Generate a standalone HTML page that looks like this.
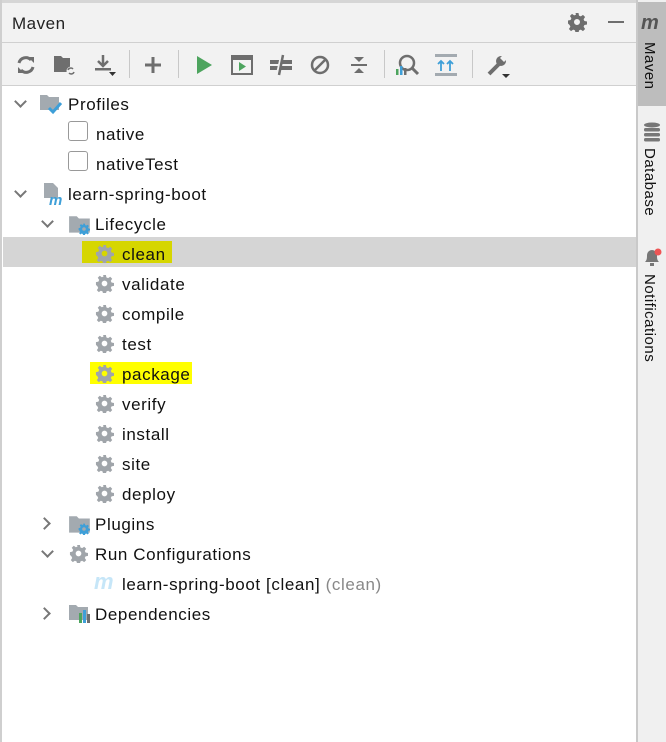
<!DOCTYPE html>
<html><head><meta charset="utf-8"><style>
*{margin:0;padding:0;box-sizing:border-box}
body{width:666px;height:742px;overflow:hidden;background:#fff;font-family:"Liberation Sans",sans-serif;position:relative;color:#111}
.a{position:absolute}
.hdr{left:2px;top:2px;width:634px;height:41px;background:#f2f2f2;border-bottom:1px solid #d0d0d0;border-top:1px solid #d6d6d6}
.tb{left:2px;top:43px;width:634px;height:43px;background:#f2f2f2;border-bottom:1px solid #d0d0d0}
.row{position:absolute;left:2px;width:634px;height:30px;font-size:17px;line-height:32px;letter-spacing:0.6px}
.row span{position:absolute;top:0;white-space:nowrap}
.chev{position:absolute;width:9px;height:9px;border-right:2px solid #777;border-bottom:2px solid #777}
.down{transform:rotate(45deg)}
.right{transform:rotate(-45deg)}
.cb{position:absolute;width:20px;height:20px;border:1.5px solid #999;border-radius:3px;background:#fff}
.sep{position:absolute;top:50px;width:1px;height:28px;background:#c8c8c8}
</style></head><body>
<svg width="0" height="0" style="position:absolute"><defs>
<symbol id="g" viewBox="0 0 20 20"><path fill="currentColor" fill-rule="evenodd" d="M8.5 1h3l.5 2.6 1.8.8 2.2-1.5 2.1 2.1-1.5 2.2.8 1.8 2.6.5v3l-2.6.5-.8 1.8 1.5 2.2-2.1 2.1-2.2-1.5-1.8.8-.5 2.6h-3l-.5-2.6-1.8-.8-2.2 1.5-2.1-2.1 1.5-2.2-.8-1.8L1 11.5v-3l2.6-.5.8-1.8-1.5-2.2 2.1-2.1 2.2 1.5 1.8-.8zM10 7a3 3 0 1 0 0 6 3 3 0 1 0 0-6z"/></symbol>
<symbol id="f" viewBox="0 0 22 20"><path fill="#a3aab0" d="M1 2h7l2 2h10v13H1z"/></symbol>
</defs></svg>
<div class="a" style="left:0;top:0;width:666px;height:2px;background:#d6d6d6"></div>
<div class="a" style="left:0;top:0;width:2px;height:742px;background:#cfcfcf"></div>
<div class="a hdr"></div>
<div class="a" style="left:12px;top:14px;font-size:17px;color:#222;letter-spacing:0.5px">Maven</div>
<svg class="a" style="left:567px;top:12px;color:#6e6e6e" width="20" height="20"><use href="#g"/></svg>
<div class="a" style="left:608px;top:21px;width:16px;height:2px;background:#6e6e6e"></div>
<div class="a tb"></div>
<svg class="a" style="left:15px;top:54px" width="22" height="22" viewBox="0 0 22 22"><path d="M4 9a7 7 0 0 1 12-3M18 13a7 7 0 0 1-12 3" stroke="#6e6e6e" stroke-width="3" fill="none"/><path d="M13 3h6v6zM9 19H3v-6z" fill="#6e6e6e"/></svg>
<svg class="a" style="left:53px;top:55px" width="24" height="22" viewBox="0 0 24 22"><path d="M1 1h7l2 2h7v14H1z" fill="#6e6e6e"/><circle cx="18" cy="16" r="4.5" fill="#f2f2f2"/><path d="M15 15a3 3 0 0 1 5-1M21 17a3 3 0 0 1-5 1" stroke="#6e6e6e" stroke-width="1.5" fill="none"/></svg>
<svg class="a" style="left:94px;top:53px" width="24" height="26" viewBox="0 0 24 26"><path d="M9 2v10M4 8l5 5 5-5" stroke="#6e6e6e" stroke-width="2.5" fill="none"/><rect x="1" y="15" width="16" height="2.5" fill="#6e6e6e"/><path d="M15 19h7l-3.5 4z" fill="#333"/></svg>
<div class="sep" style="left:129px"></div>
<svg class="a" style="left:145px;top:57px" width="16" height="16"><path d="M8 0v16M0 8h16" stroke="#6e6e6e" stroke-width="3"/></svg>
<div class="sep" style="left:178px"></div>
<svg class="a" style="left:196px;top:56px" width="16" height="18"><path d="M1 0l15 9-15 9z" fill="#4da45e"/></svg>
<svg class="a" style="left:231px;top:55px" width="22" height="20"><rect x="1" y="1" width="20" height="18" fill="none" stroke="#6e6e6e" stroke-width="2"/><rect x="1" y="1" width="20" height="4" fill="#6e6e6e"/><path d="M8 7l7 4.5-7 4.5z" fill="#4da45e"/></svg>
<svg class="a" style="left:269px;top:54px" width="24" height="22"><path d="M1 8h22M1 14h22" stroke="#6e6e6e" stroke-width="4"/><path d="M13 0L8 22" stroke="#f2f2f2" stroke-width="3"/><path d="M14 1L10 21" stroke="#6e6e6e" stroke-width="2.5"/></svg>
<svg class="a" style="left:310px;top:55px" width="20" height="20"><circle cx="10" cy="10" r="8" fill="none" stroke="#6e6e6e" stroke-width="2.5"/><path d="M5 15L15 5" stroke="#6e6e6e" stroke-width="2.5"/></svg>
<svg class="a" style="left:349px;top:55px" width="20" height="20"><path d="M2 10h16" stroke="#6e6e6e" stroke-width="2"/><path d="M5 2h10l-5 5zM5 18h10l-5-5z" fill="#6e6e6e"/></svg>
<div class="sep" style="left:384px"></div>
<svg class="a" style="left:394px;top:53px" width="26" height="26" viewBox="0 0 26 26"><circle cx="13" cy="10" r="7" fill="none" stroke="#6e6e6e" stroke-width="2.5"/><path d="M18 15l6 6" stroke="#6e6e6e" stroke-width="3"/><rect x="2" y="16" width="2.5" height="6" fill="#4da45e"/><rect x="6" y="13" width="2.5" height="9" fill="#3e9fd8"/><rect x="10" y="15" width="2.5" height="7" fill="#6e6e6e"/></svg>
<svg class="a" style="left:434px;top:53px" width="24" height="24"><rect x="1" y="1" width="22" height="3" fill="#a3aab0"/><rect x="1" y="20" width="22" height="3" fill="#a3aab0"/><path d="M7 18V8M4 11l3-3 3 3M16 18V8M13 11l3-3 3 3" stroke="#3e9fd8" stroke-width="1.8" fill="none"/></svg>
<div class="sep" style="left:472px"></div>
<svg class="a" style="left:486px;top:53px" width="26" height="26" viewBox="0 0 26 26"><path d="M3 21L13 11" stroke="#6e6e6e" stroke-width="4"/><circle cx="15" cy="8" r="5" fill="#6e6e6e"/><path d="M14 5l4-4 4 4-4 4z" fill="#f2f2f2"/><path d="M16 21h8l-4 4z" fill="#333"/></svg>
<div class="a" style="left:636px;top:0;width:2px;height:742px;background:#c9c9c9"></div>
<div class="a" style="left:638px;top:0;width:28px;height:742px;background:#f0f0f0"></div>
<div class="a" style="left:638px;top:2px;width:28px;height:104px;background:#bdbdbd"></div>
<div class="a" style="left:641px;top:12px;font-size:20px;font-weight:bold;font-style:italic;color:#555">m</div>
<div class="a" style="left:641px;top:42px;font-size:15px;writing-mode:vertical-rl;color:#111;letter-spacing:0.5px">Maven</div>
<svg class="a" style="left:643px;top:122px" width="18" height="20"><ellipse cx="9" cy="3" rx="8" ry="2.5" fill="#777"/><rect x="1" y="6" width="16" height="3.5" rx="1.5" fill="#777"/><rect x="1" y="11" width="16" height="3.5" rx="1.5" fill="#777"/><rect x="1" y="16" width="16" height="3.5" rx="1.5" fill="#777"/></svg>
<div class="a" style="left:641px;top:148px;font-size:15px;writing-mode:vertical-rl;color:#111;letter-spacing:0.5px">Database</div>
<svg class="a" style="left:643px;top:248px" width="20" height="20"><path d="M2 14c2-2 2-4 2-7a5 5 0 0 1 10 0c0 3 0 5 2 7z" fill="#777"/><rect x="7" y="15" width="4" height="3" fill="#777"/><circle cx="15" cy="4" r="3.5" fill="#e55"/></svg>
<div class="a" style="left:641px;top:274px;font-size:15px;writing-mode:vertical-rl;color:#111;letter-spacing:0.5px">Notifications</div>
<div class="a" style="left:3px;top:237px;width:633px;height:30px;background:#d5d5d5"></div>
<div class="a" style="left:82px;top:241px;width:90px;height:22px;background:#d6d600"></div>
<div class="a" style="left:90px;top:362px;width:102px;height:22px;background:#ffff00"></div>

<div class="row" style="top:89px"><i class="chev down" style="left:14px;top:8px"></i>
<svg class="a" style="left:37px;top:4px" width="26" height="22" viewBox="0 0 26 22"><path fill="#a3aab0" d="M1 2h7l2 2h10v13H1z"/><path d="M10 15l4 4 8-9" stroke="#3e9fd8" stroke-width="3" fill="none"/></svg>
<span style="left:66px">Profiles</span></div>
<div class="row" style="top:119px"><i class="cb" style="left:66px;top:2px"></i><span style="left:94px">native</span></div>
<div class="row" style="top:149px"><i class="cb" style="left:66px;top:2px"></i><span style="left:94px">nativeTest</span></div>
<div class="row" style="top:179px"><i class="chev down" style="left:14px;top:8px"></i>
<svg class="a" style="left:40px;top:3px" width="24" height="24" viewBox="0 0 24 24"><path d="M2 1h9l5 5v10H2z" fill="#a3aab0"/><text x="7" y="23" font-family="Liberation Sans" font-weight="bold" font-style="italic" font-size="15" fill="#3e9fd8">m</text></svg>
<span style="left:66px">learn-spring-boot</span></div>
<div class="row" style="top:209px"><i class="chev down" style="left:41px;top:8px"></i>
<svg class="a" style="left:66px;top:4px" width="24" height="24"><use href="#f"/><svg x="10" y="10" width="12" height="12" style="color:#3e9fd8"><use href="#g"/></svg></svg>
<span style="left:93px">Lifecycle</span></div>
<div class="row" style="top:239px"><svg class="a" style="left:93px;top:5px;color:#a0a5aa" width="19" height="19"><use href="#g"/></svg><span style="left:120px">clean</span></div>
<div class="row" style="top:269px"><svg class="a" style="left:93px;top:5px;color:#a0a5aa" width="19" height="19"><use href="#g"/></svg><span style="left:120px">validate</span></div>
<div class="row" style="top:299px"><svg class="a" style="left:93px;top:5px;color:#a0a5aa" width="19" height="19"><use href="#g"/></svg><span style="left:120px">compile</span></div>
<div class="row" style="top:329px"><svg class="a" style="left:93px;top:5px;color:#a0a5aa" width="19" height="19"><use href="#g"/></svg><span style="left:120px">test</span></div>
<div class="row" style="top:359px"><svg class="a" style="left:93px;top:5px;color:#a0a5aa" width="19" height="19"><use href="#g"/></svg><span style="left:120px">package</span></div>
<div class="row" style="top:389px"><svg class="a" style="left:93px;top:5px;color:#a0a5aa" width="19" height="19"><use href="#g"/></svg><span style="left:120px">verify</span></div>
<div class="row" style="top:419px"><svg class="a" style="left:93px;top:5px;color:#a0a5aa" width="19" height="19"><use href="#g"/></svg><span style="left:120px">install</span></div>
<div class="row" style="top:449px"><svg class="a" style="left:93px;top:5px;color:#a0a5aa" width="19" height="19"><use href="#g"/></svg><span style="left:120px">site</span></div>
<div class="row" style="top:479px"><svg class="a" style="left:93px;top:5px;color:#a0a5aa" width="19" height="19"><use href="#g"/></svg><span style="left:120px">deploy</span></div>
<div class="row" style="top:509px"><i class="chev right" style="left:38px;top:10px"></i>
<svg class="a" style="left:66px;top:4px" width="24" height="24"><use href="#f"/><svg x="10" y="10" width="12" height="12" style="color:#3e9fd8"><use href="#g"/></svg></svg>
<span style="left:93px">Plugins</span></div>
<div class="row" style="top:539px"><i class="chev down" style="left:41px;top:8px"></i><svg class="a" style="left:67px;top:5px;color:#a0a5aa" width="19" height="19"><use href="#g"/></svg><span style="left:93px">Run Configurations</span></div>
<div class="row" style="top:569px"><span style="left:92px;font-size:22px;font-weight:bold;font-style:italic;color:#c6e6f8;top:-3px">m</span><span style="left:120px">learn-spring-boot [clean] <span style="position:static;color:#888">(clean)</span></span></div>
<div class="row" style="top:599px"><i class="chev right" style="left:38px;top:10px"></i>
<svg class="a" style="left:66px;top:4px" width="24" height="22" viewBox="0 0 24 22"><path fill="#a3aab0" d="M1 2h7l2 2h10v13H1z"/><rect x="11" y="10" width="3" height="10" fill="#4da45e"/><rect x="15" y="7" width="3" height="13" fill="#3e9fd8"/><rect x="19" y="11" width="3" height="9" fill="#6e6e6e"/></svg>
<span style="left:93px">Dependencies</span></div>
</body></html>
